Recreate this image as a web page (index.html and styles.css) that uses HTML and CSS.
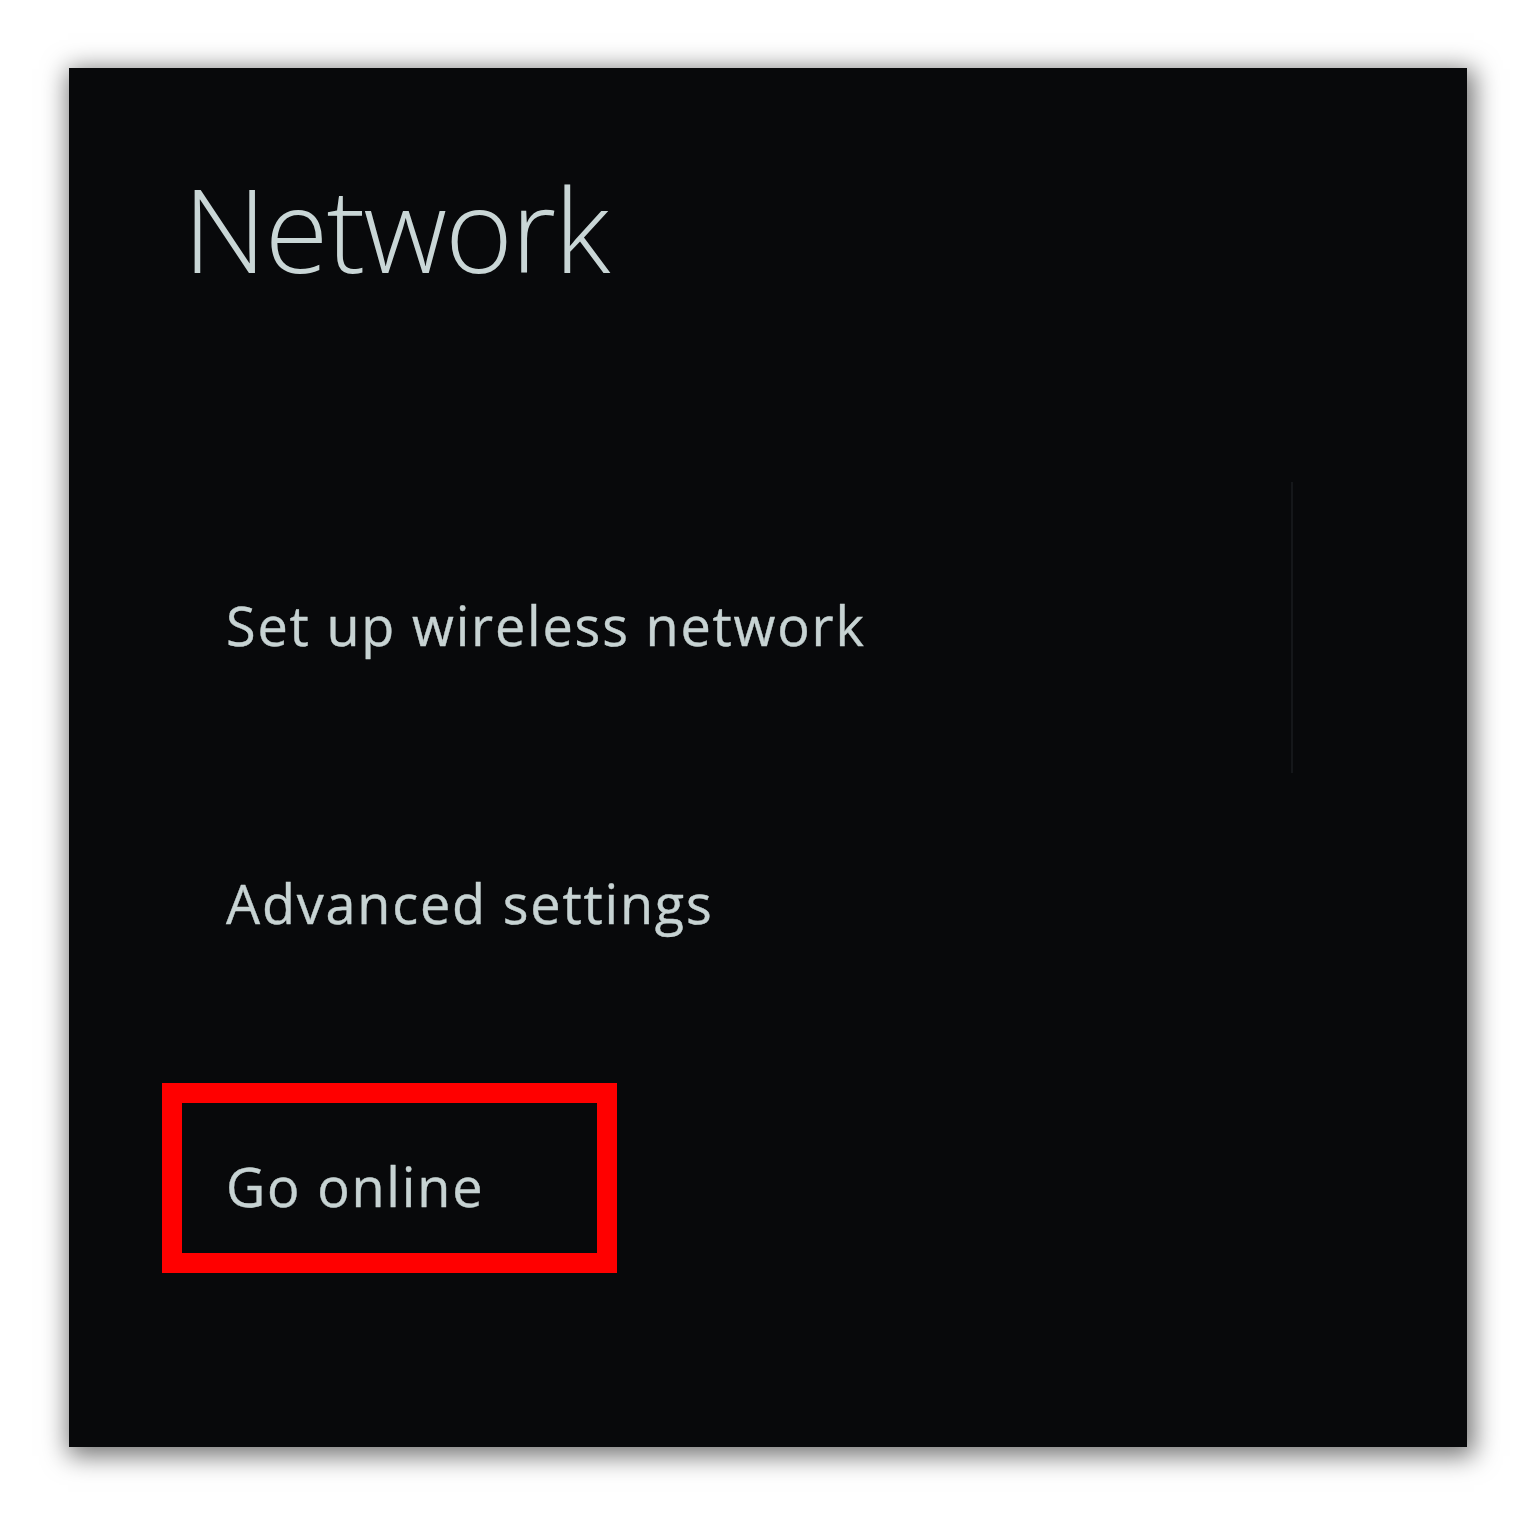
FILE: index.html
```html
<!DOCTYPE html>
<html lang="en">
<head>
<meta charset="utf-8">
<title>Network</title>
<link rel="stylesheet" href="styles.css">
</head>
<body>
<main class="panel">
  <h1 class="title">Network</h1>
  <div class="content">
    <ul class="menu">
      <li class="menu-item">Set up wireless network</li>
      <li class="menu-item">Advanced settings</li>
      <li class="menu-item is-selected">Go online</li>
    </ul>
    <div class="divider"></div>
  </div>
</main>
</body>
</html>
```
FILE: styles.css
```css
html, body {
  margin: 0;
  padding: 0;
  background: #ffffff;
}

body {
  width: 1536px;
  height: 1517px;
  font-family: "Open Sans", "Noto Sans", sans-serif;
}

.panel {
  box-sizing: border-box;
  width: 1398px;
  height: 1379px;
  margin: 68px 0 0 69px;
  padding: 102px 0 0 93px;
  background: #08090b;
  box-shadow: 3px 5px 24px 4px rgba(0, 0, 0, 0.55);
  color: #c7d3d3;
}

.title {
  margin: 0 0 0 21px;
  font-size: 116px;
  line-height: 116px;
  font-weight: 300;
  letter-spacing: -2px;
  color: #c9d6d6;
}

.content {
  display: flex;
  margin-top: 196px;
}

.menu {
  list-style: none;
  margin: 0;
  padding: 39px 0 0 0;
  width: 1129px;
  display: flex;
  flex-direction: column;
  gap: 88px;
}

.menu-item {
  align-self: flex-start;
  padding: 52px 44px 34px 44px;
  border: 20px solid transparent;
  font-size: 54px;
  line-height: 64px;
  font-weight: 400;
  letter-spacing: 1.8px;
  white-space: nowrap;
  -webkit-text-stroke: 0.4px #c7d3d3;
}

.menu-item.is-selected {
  margin-top: 6px;
  padding-top: 51px;
  padding-bottom: 35px;
  border-color: #ff0000;
  width: 327px;
  box-sizing: content-box;
}

.divider {
  flex: none;
  width: 2px;
  height: 291px;
  background: #15171a;
}
```
